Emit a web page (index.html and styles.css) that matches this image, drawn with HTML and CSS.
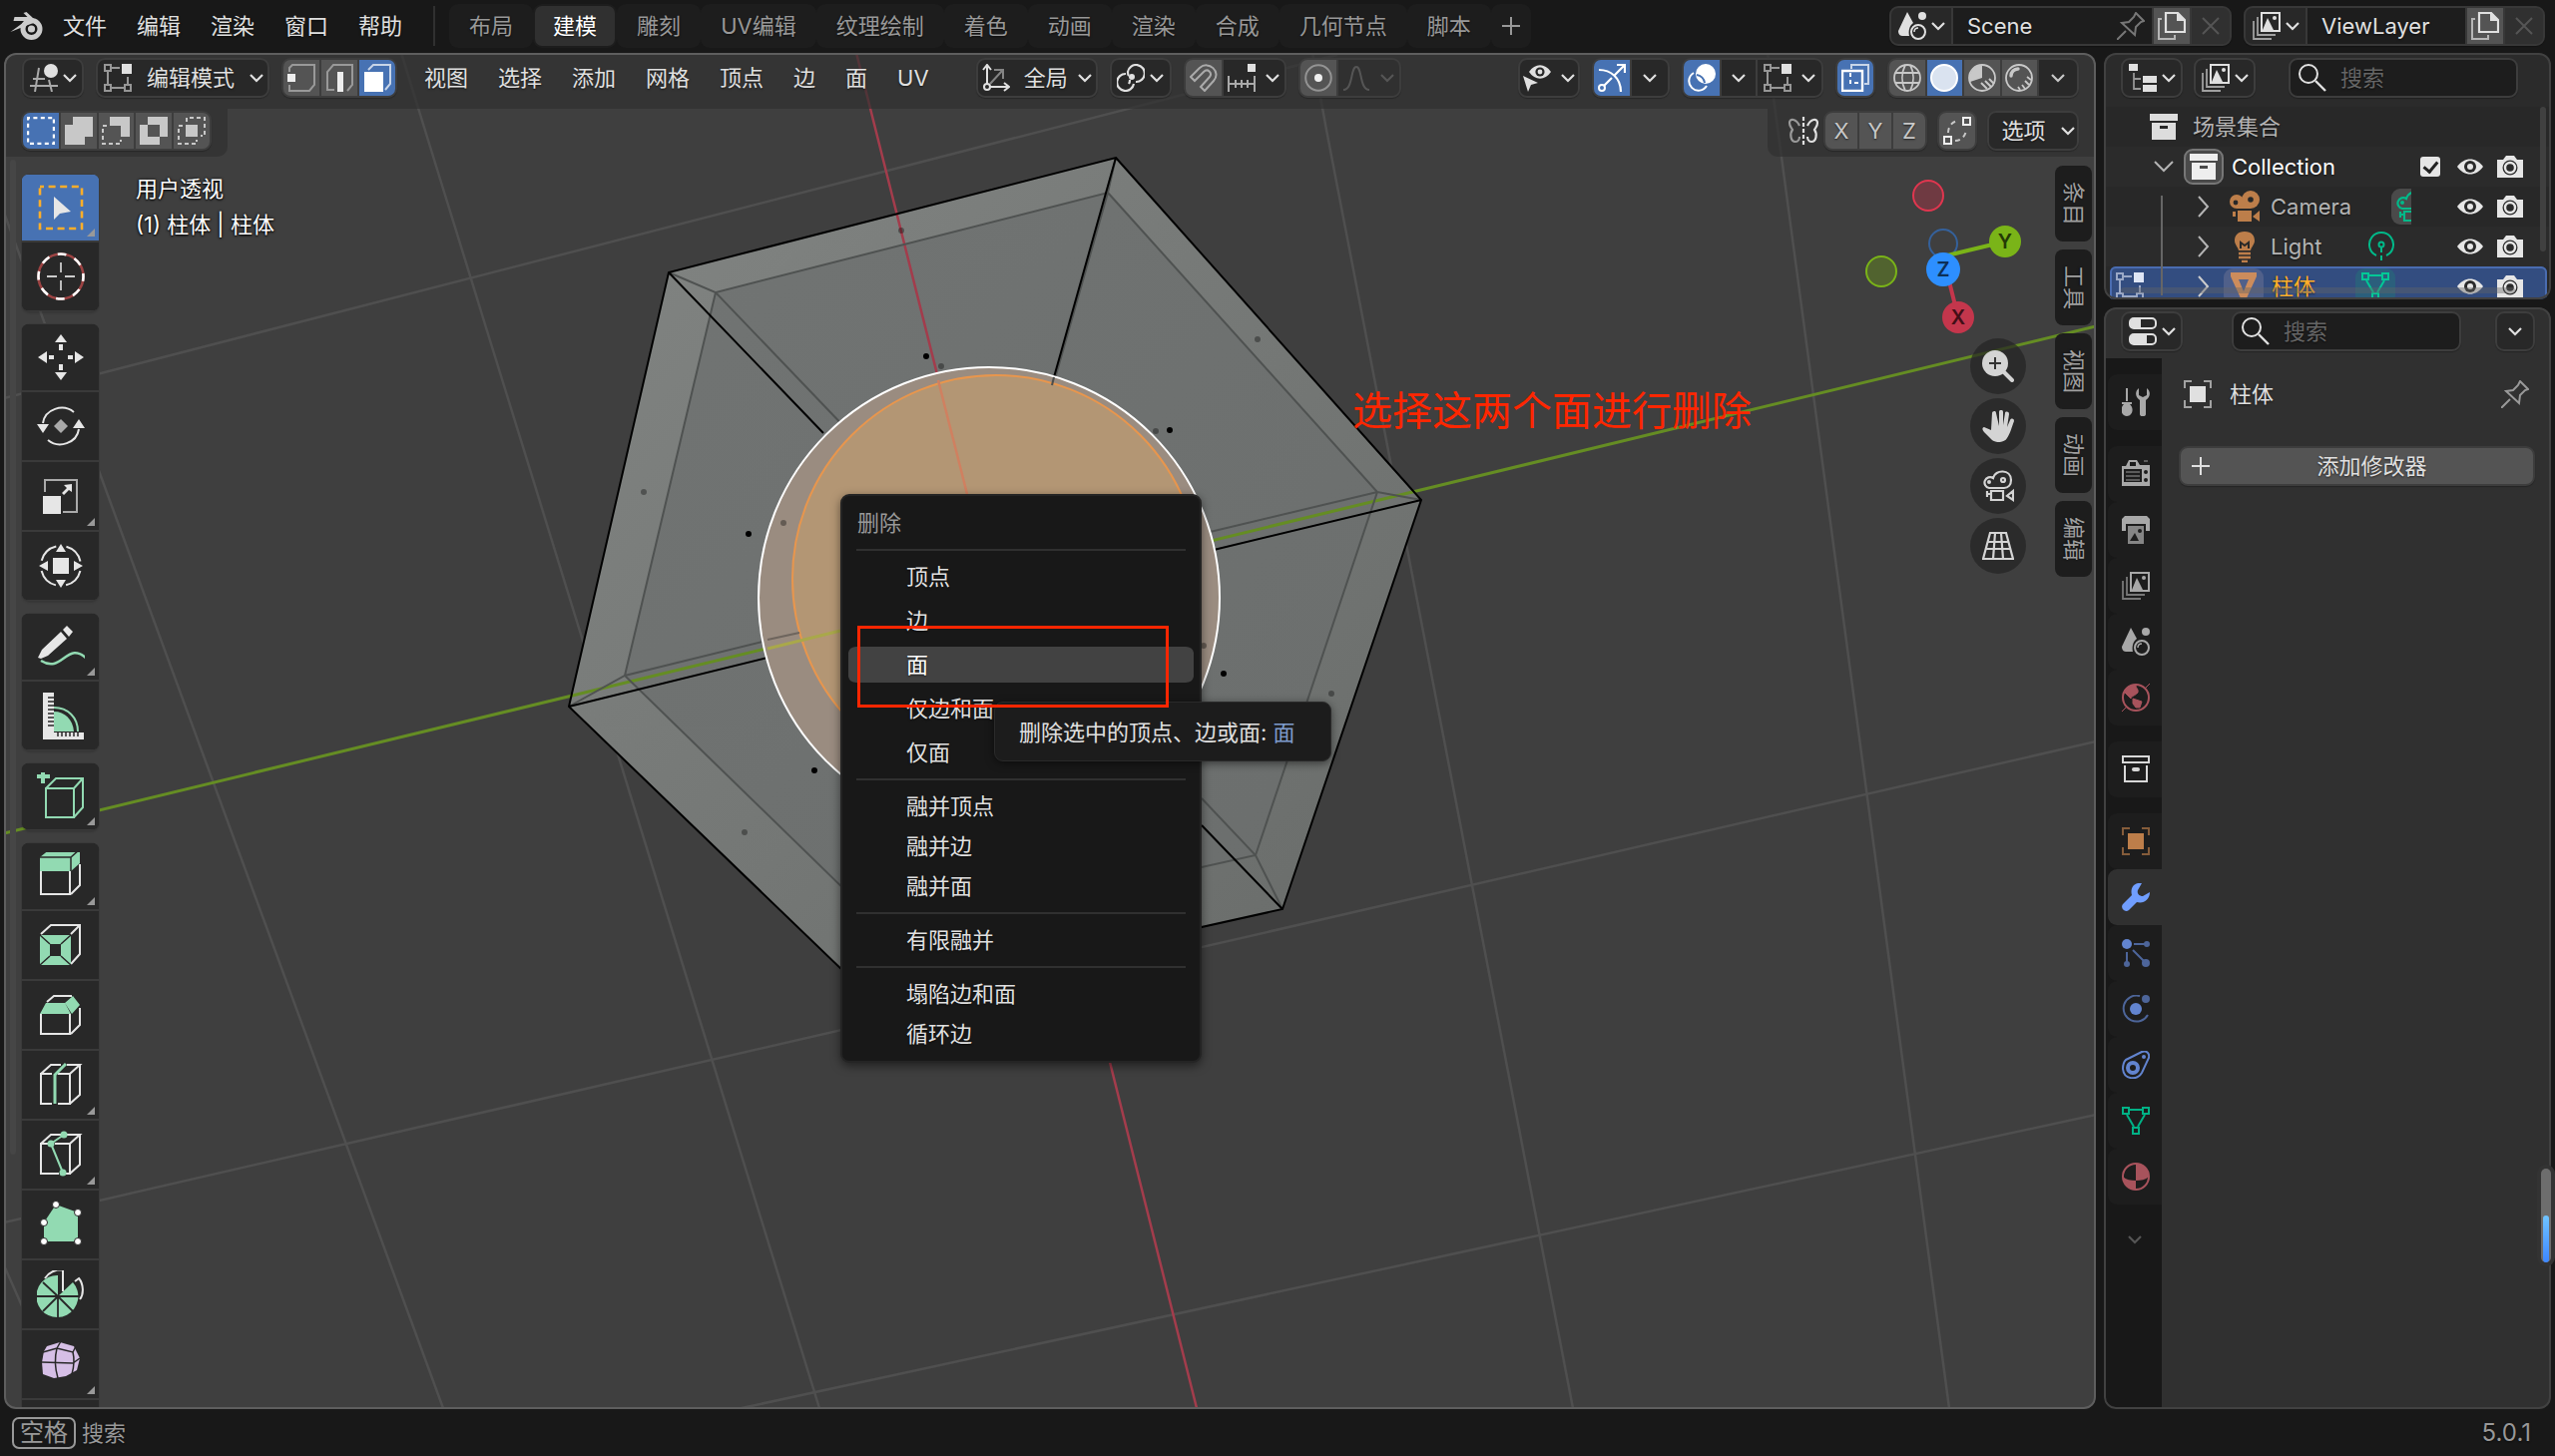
FILE: index.html
```html
<!DOCTYPE html>
<html lang="zh-CN">
<head>
<meta charset="utf-8">
<title>Blender</title>
<link rel="stylesheet" href="styles.css">
</head>
<body>
<svg class="defs" aria-hidden="true">
  <symbol id="chev" viewBox="0 0 14 14"><path d="M1 4l6 6 6-6" fill="none" stroke="currentColor" stroke-width="2.2"/></symbol>
  <symbol id="chevR" viewBox="0 0 28 28"><path d="M9 4l9 10-9 10" fill="none" stroke="currentColor" stroke-width="2"/></symbol>
  <symbol id="chevD" viewBox="0 0 28 28"><path d="M5 9l9 9 9-9" fill="none" stroke="currentColor" stroke-width="2"/></symbol>
  <symbol id="plus" viewBox="0 0 20 20"><path d="M10 1v18M1 10h18" stroke="currentColor" stroke-width="2"/></symbol>
  <symbol id="x" viewBox="0 0 28 28"><path d="M6 6l16 16M22 6L6 22" stroke="currentColor" stroke-width="2"/></symbol>
  <symbol id="logo" viewBox="0 0 32 28"><path d="M0 20L15 9H3l1-4h13l-4-4 3-1 13 12-3 1-3-2-8 3z" fill="currentColor"/><circle cx="21" cy="17" r="8.5" fill="none" stroke="currentColor" stroke-width="5"/><circle cx="21" cy="17" r="3.6" fill="currentColor"/></symbol>
  <symbol id="view3d" viewBox="0 0 28 28"><path d="M9 4L5 28M19 16l3 12M3 15h12M0 22h28" fill="none" stroke="currentColor" stroke-width="2" opacity=".7"/><circle cx="21" cy="7" r="7" fill="currentColor"/></symbol>
  <symbol id="editmode" viewBox="0 0 28 28"><path d="M1 1h6v6H1zM1 21h6v6H1zM21 21h6v6h-6zM4 8v12M8 24h12M24 13v7M8 4h8" fill="none" stroke="currentColor" stroke-width="2" opacity=".6"/><path d="M18 0h10v10H18z" fill="currentColor"/></symbol>
  <symbol id="selV" viewBox="0 0 28 28"><path d="M2 8V4l3-3h22v20l-5 6H2v-6" fill="none" stroke="currentColor" stroke-width="2" opacity=".6"/><path d="M0 10h8v8H0z" fill="#eee"/></symbol>
  <symbol id="selE" viewBox="0 0 28 28"><path d="M9 26H2V8l6-7h19v20l-5 6" fill="none" stroke="currentColor" stroke-width="2" opacity=".6"/><path d="M12 8h6v20h-6z" fill="#eee"/></symbol>
  <symbol id="selF" viewBox="0 0 28 28"><path d="M5 6l5-5h17v19l-5 6" fill="none" stroke="currentColor" stroke-width="2" opacity=".7"/><path d="M1 8h19v20H1z" fill="#fff"/></symbol>
  <symbol id="s1" viewBox="0 0 28 28"><rect x="1" y="1" width="26" height="26" fill="none" stroke="#fff" stroke-width="2.4" stroke-dasharray="4 3.4" stroke-dashoffset="2"/></symbol>
  <symbol id="s2" viewBox="0 0 28 28"><path d="M8 0h20v20h-8v8H0V8h8z" fill="currentColor"/></symbol>
  <symbol id="s3" viewBox="0 0 28 28"><path d="M8 0h20v20h-9V9H8z" fill="currentColor"/><path d="M5 9H1v18h18v-4" fill="none" stroke="currentColor" stroke-width="2" stroke-dasharray="4 3"/></symbol>
  <symbol id="s4" viewBox="0 0 28 28"><path fill-rule="evenodd" d="M8 0h20v20h-8v8H0V8h8zM8 8v12h12V8z" fill="currentColor"/></symbol>
  <symbol id="s5" viewBox="0 0 28 28"><path d="M8 8h12v12H8z" fill="currentColor"/><path d="M5 9H1v18h18v-4M9 5V1h18v18h-4" fill="none" stroke="currentColor" stroke-width="2" stroke-dasharray="4 3"/></symbol>
  <symbol id="orient" viewBox="0 0 28 28"><path d="M5 20V2M1 6l4-5 4 5M8 23h19M22 19l5 4-5 4" fill="none" stroke="currentColor" stroke-width="2"/><circle cx="5" cy="23" r="3" fill="none" stroke="currentColor" stroke-width="2"/><path d="M8 20L20 7M12 6h9v9" fill="none" stroke="currentColor" stroke-width="2" opacity=".5"/></symbol>
  <symbol id="pivot" viewBox="0 0 28 28"><path d="M9 10a8.500 8.500 0 1 0 8 10M12 20a7 7 0 0 0 1-4M19 18a8.500 8.500 0 1 0-8-10c0 2 0 3 1 4" fill="none" stroke="currentColor" stroke-width="2.2"/><circle cx="15" cy="13" r="3" fill="currentColor"/></symbol>
  <symbol id="magnet" viewBox="0 0 28 28"><path d="M1 13L10 4c9-8 22 4 14 13l-9 10-4-4 9-10c3-4-2-9-6-5l-9 9z" fill="none" stroke="currentColor" stroke-width="2"/></symbol>
  <symbol id="snap" viewBox="0 0 28 28"><path d="M1 12v16M27 12v16M1 20h26M8 16v8M14 16v8M20 16v8" stroke="currentColor" stroke-width="2" opacity=".7"/><path d="M20 0h8v8h-8z" fill="currentColor"/></symbol>
  <symbol id="prop" viewBox="0 0 28 28"><circle cx="14" cy="14" r="12.8" fill="none" stroke="currentColor" stroke-width="2" opacity=".45"/><circle cx="14" cy="14" r="4" fill="#eee"/></symbol>
  <symbol id="curve" viewBox="0 0 28 28"><path d="M1 26c10 0 7-23 13-23s3 23 13 23" fill="none" stroke="currentColor" stroke-width="2"/></symbol>
  <symbol id="eyecur" viewBox="0 0 28 28"><path d="M6 8c6-9 16-9 22 0-6 9-16 9-22 0z" fill="currentColor"/><circle cx="17" cy="8" r="4.6" fill="#282828"/><circle cx="17" cy="8" r="2.4" fill="currentColor"/><path d="M0 12l15 7-7 2-3 7z" fill="currentColor"/></symbol>
  <symbol id="giz" viewBox="0 0 28 28"><path d="M1 6c12 0 22 8 22 22M6 22L14 14M17 11L26 2M19 1h8v8" fill="none" stroke="currentColor" stroke-width="2.2"/><circle cx="4" cy="24" r="3" fill="#4772b3" stroke="currentColor" stroke-width="2"/></symbol>
  <symbol id="overl" viewBox="0 0 28 28"><circle cx="18" cy="10" r="10" fill="currentColor"/><path d="M6 9a9.500 9.500 0 1 0 13 13" fill="none" stroke="currentColor" stroke-width="2"/><path d="M9 11a9 9 0 0 1 8 8" fill="none" stroke="#4772b3" stroke-width="2"/></symbol>
  <symbol id="xray" viewBox="0 0 28 28"><path d="M10 5V1h17v19h-4" fill="none" stroke="currentColor" stroke-width="2" opacity=".7"/><path d="M1 7h20v20H1z" fill="none" stroke="currentColor" stroke-width="2.4"/><path d="M9 9v10h10" fill="none" stroke="currentColor" stroke-width="2" stroke-dasharray="4 3"/></symbol>
  <symbol id="wire" viewBox="0 0 28 28"><g fill="none" stroke="currentColor" stroke-width="1.8"><circle cx="14" cy="14" r="13"/><path d="M2 9h24M2 19h24M12 1c-4 8-4 18 0 26M17 1c4 8 4 18 0 26"/></g></symbol>
  <symbol id="solid" viewBox="0 0 28 28"><circle cx="14" cy="14" r="13" fill="#dae3f0" stroke="#fff" stroke-width="2"/></symbol>
  <symbol id="matp" viewBox="0 0 28 28"><circle cx="14" cy="14" r="13" fill="none" stroke="currentColor" stroke-width="1.8"/><path d="M14 1v13l-12 4A13 13 0 0 1 14 1z" fill="currentColor"/><path d="M13 19l6 6M17 17l6 6M21 15l5 5" stroke="currentColor" stroke-width="2"/></symbol>
  <symbol id="rend" viewBox="0 0 28 28"><circle cx="14" cy="14" r="13" fill="none" stroke="currentColor" stroke-width="1.8"/><path d="M6 12c0-4 3-7 7-7" stroke="currentColor" stroke-width="3.4" fill="none" stroke-linecap="round"/><path d="M13 23l2 3M17 21l3 4M20 17l4 4M22 13l4 3" stroke="currentColor" stroke-width="1.8"/></symbol>
  <symbol id="mirror" viewBox="0 0 32 28"><g fill="none" stroke="currentColor" stroke-width="2.2"><path d="M12 9C9 2 2 1 2 6c0 4 2 5 3 7-3 4-2 12 3 12 3 0 4-3 4-5" opacity=".6"/><path d="M20 9c3-7 10-8 10-3 0 4-2 5-3 7 3 4 2 12-3 12-3 0-4-3-4-5"/><path d="M16 0v28" stroke-dasharray="4 2"/></g></symbol>
  <symbol id="merge" viewBox="0 0 28 28"><g fill="none" stroke="currentColor" stroke-width="2"><path d="M20 1h7v7h-7zM1 20h7v7H1z" stroke="#eee"/><path d="M5 16c0-7 5-12 11-12M12 24c6 0 11-5 11-12" stroke-dasharray="5 4"/></g></symbol>
  <symbol id="scene" viewBox="0 0 28 28"><path d="M9 0l6 11c-4 3-5 8-4 13H4c-3 0-4-3-4-5z" fill="currentColor"/><circle cx="24" cy="4" r="4" fill="currentColor"/><circle cx="20" cy="20" r="7" fill="none" stroke="currentColor" stroke-width="2"/><path d="M16 20c0-2 1-4 4-4" fill="none" stroke="currentColor" stroke-width="1.5"/></symbol>
  <symbol id="layer" viewBox="0 0 28 28"><path d="M5 5v18h18M1 9v18h18" fill="none" stroke="currentColor" stroke-width="1.8" opacity=".65"/><path d="M9 1h18v18H9z" fill="none" stroke="currentColor" stroke-width="2"/><path d="M10 18l5-12 6 12z" fill="currentColor"/><circle cx="22" cy="6" r="2" fill="currentColor"/></symbol>
  <symbol id="copy" viewBox="0 0 28 28"><path d="M4 7H1v20h16v-4" fill="none" stroke="currentColor" stroke-width="2" opacity=".7"/><path d="M8 1h12l7 7v12H8z" fill="none" stroke="currentColor" stroke-width="2.2"/><path d="M19 0l9 9h-9z" fill="currentColor"/></symbol>
  <symbol id="pin" viewBox="0 0 28 28"><path d="M0 28l9-9M19 1l8 8-3 1-5 5-1 8L5 11l7-1 5-5z" fill="none" stroke="currentColor" stroke-width="2"/></symbol>
  <symbol id="tree" viewBox="0 0 28 28"><path d="M0 0h9v7H0zM14 12h14v7H14zM14 21h14v7H14z" fill="currentColor"/><path d="M5 9v16h7M5 15h7" fill="none" stroke="currentColor" stroke-width="1.8" opacity=".6"/></symbol>
  <symbol id="search" viewBox="0 0 28 28"><circle cx="10" cy="10" r="9" fill="none" stroke="currentColor" stroke-width="2"/><path d="M17 17l10 10" stroke="currentColor" stroke-width="2.4"/></symbol>
  <symbol id="box" viewBox="0 0 28 28"><path d="M0 1h28v7H0z" fill="currentColor"/><path fill-rule="evenodd" d="M2 10h24v17H2zM10 13v3h8v-3z" fill="currentColor"/></symbol>
  <symbol id="boxo" viewBox="0 0 28 28"><path d="M1 1h26v6H1zM3 10v16h22V10" fill="none" stroke="currentColor" stroke-width="2"/><rect x="10" y="12" width="8" height="4" rx="2" fill="currentColor"/></symbol>
  <symbol id="eye" viewBox="0 0 28 28"><path d="M1 14c7-10 19-10 26 0-7 10-19 10-26 0z" fill="currentColor"/><circle cx="14" cy="14" r="6" fill="#2a2a2a"/><circle cx="14" cy="14" r="3" fill="currentColor"/></symbol>
  <symbol id="cam" viewBox="0 0 28 28"><path d="M1 7h6l3-4h8l3 4h6v18H1z" fill="currentColor"/><circle cx="14" cy="15" r="7.5" fill="#2a2a2a"/><circle cx="14" cy="15" r="5" fill="none" stroke="currentColor" stroke-width="2.4"/></symbol>
  <symbol id="movie" viewBox="0 0 32 32"><circle cx="8" cy="11" r="7" fill="currentColor"/><circle cx="22" cy="9" r="9" fill="currentColor"/><path d="M8 10h14v8H8zM9 20h14v11H9zM4 21h3v5H4zM31 20v11l-7-5z" fill="currentColor"/><circle cx="7" cy="12" r="2.4" fill="#282828"/><circle cx="22" cy="9" r="2.8" fill="#282828"/></symbol>
  <symbol id="movieo" viewBox="0 0 32 32"><g fill="none" stroke="currentColor" stroke-width="2.2"><path d="M7 18a5.500 5.500 0 1 1 4-10c2-9 18-9 18 2 0 5-3 8-7 8zM9 21h12v9H9zM5 21v6M5 24h4M31 21v9l-6-4z"/><circle cx="21" cy="10" r="2"/></g><circle cx="7" cy="12" r="2" fill="currentColor"/></symbol>
  <symbol id="bulb" viewBox="0 0 32 32"><path d="M16 1c7 0 10 4 10 9 0 4-3 6-4 10H10c-1-4-4-6-4-10 0-5 3-9 10-9z" fill="currentColor"/><path d="M10 23h12M10 27h12M13 31h6" stroke="currentColor" stroke-width="2.4"/><path d="M12 18v-6l4 3 4-3v6" fill="none" stroke="#282828" stroke-width="2"/></symbol>
  <symbol id="ldata" viewBox="0 0 28 32"><path d="M9 25A12 12 0 1 1 19 25" fill="none" stroke="currentColor" stroke-width="2"/><circle cx="14" cy="14" r="2.500" fill="none" stroke="currentColor" stroke-width="2"/><path d="M14 17v5M14 25v5" stroke="currentColor" stroke-width="2"/></symbol>
  <symbol id="meshd" viewBox="0 0 28 28"><path d="M1 1h6v6H1zM21 1h6v6h-6zM11 21h6v6h-6zM8 3h12M5 8l7 12M23 8l-7 12" fill="none" stroke="currentColor" stroke-width="2"/></symbol>
  <symbol id="mesho" viewBox="0 0 28 28"><path fill-rule="evenodd" d="M1 0h26v4L16 28h-4L1 4zM9 7l5 12 5-12z" fill="currentColor"/></symbol>
  <symbol id="props" viewBox="0 0 28 28"><rect x="1" y="1" width="26" height="10" rx="4" fill="none" stroke="currentColor" stroke-width="2"/><rect x="1" y="17" width="26" height="10" rx="4" fill="none" stroke="currentColor" stroke-width="2"/><path d="M4 1h8v10H4l-3-3V4zM4 17h14v10H4l-3-3v-4z" fill="currentColor"/></symbol>
  <symbol id="obj" viewBox="0 0 28 28"><path d="M6 6h16v16H6z" fill="currentColor"/><path d="M1 8V1h7M20 1h7v7M27 20v7h-7M8 27H1v-7" fill="none" stroke="currentColor" stroke-width="2" opacity=".65"/></symbol>
  <symbol id="tool" viewBox="0 0 28 28"><path d="M5 0v13" stroke="currentColor" stroke-width="2"/><path d="M0 14h10v2H8c5 5 2 12-3 12s-8-7-3-12H0zM17 0v7l4 2 4-2V0c4 3 4 9-1 12v14c0 3-6 3-6 0V12c-5-3-5-9-1-12z" fill="currentColor"/></symbol>
  <symbol id="rcam" viewBox="0 0 28 28"><path fill-rule="evenodd" d="M0 6h4l3-6h8l3 5h10v21H0zM2 9v13h18V9zM8 2v4h6V2z" fill="currentColor"/><path d="M4 12h14M4 16h14M4 20h14M22 1h4" stroke="currentColor" stroke-width="1.6" opacity=".6"/><circle cx="24" cy="12" r="2" fill="#1d1d1d"/><circle cx="24" cy="20" r="2" fill="#1d1d1d"/></symbol>
  <symbol id="print" viewBox="0 0 28 28"><path d="M3 0h22l3 3v12h-4V8H4v7H0V3z" fill="currentColor"/><path d="M6 10h16v18H6z" fill="currentColor" opacity=".75"/><path d="M8 25l5-8 4 8z" fill="#1d1d1d"/><circle cx="18" cy="15" r="2" fill="#1d1d1d"/></symbol>
  <symbol id="world" viewBox="0 0 28 28"><circle cx="14" cy="14" r="13" fill="none" stroke="currentColor" stroke-width="2"/><path d="M3 6c4-4 8-5 11-4 0 3 3 3 2 7-4 4-6 3-7 6l-6-6zM11 15l9 3-2 6h-4l-3-4zM23 5l5-5M0 28l5-5" fill="currentColor" stroke="currentColor"/></symbol>
  <symbol id="wrench" viewBox="0 0 28 28"><path d="M20 0c-8-1-12 5-10 12L1 21c-3 4 2 9 6 6l8-8c7 2 13-3 13-10l-7 4c-4 0-6-3-5-6z" fill="currentColor"/></symbol>
  <symbol id="part" viewBox="0 0 28 28"><circle cx="5" cy="5" r="5" fill="currentColor"/><g opacity=".7" fill="currentColor"><circle cx="25" cy="5" r="3"/><circle cx="24" cy="24" r="4"/><circle cx="5" cy="25" r="3"/><path d="M12 5h12M11 11l12 12M5 13v11" stroke="currentColor" stroke-width="2"/></g></symbol>
  <symbol id="phys" viewBox="0 0 28 28"><circle cx="14" cy="14" r="6" fill="currentColor"/><path d="M18 1A13 13 0 1 0 26 20" fill="none" stroke="currentColor" stroke-width="2" opacity=".7"/><circle cx="24" cy="4" r="4" fill="currentColor" opacity=".7"/></symbol>
  <symbol id="cons" viewBox="0 0 28 28"><path d="M4 9L20 1c5-2 8 2 7 6l-7 15c-5 8-18 7-19-4 0-4 1-7 3-9z" fill="none" stroke="currentColor" stroke-width="2"/><circle cx="11" cy="17" r="5" fill="none" stroke="currentColor" stroke-width="4"/><circle cx="22" cy="6" r="2" fill="currentColor"/></symbol>
  <symbol id="mat" viewBox="0 0 28 28"><circle cx="14" cy="14" r="13" fill="none" stroke="currentColor" stroke-width="2"/><path d="M14 1a13 13 0 0 1 13 13c-3 3-8 4-13 4zM1 14c3 3 8 4 13 4v9A13 13 0 0 1 1 14z" fill="currentColor"/></symbol>
  <symbol id="zoomi" viewBox="0 0 32 32"><circle cx="13" cy="13" r="13" fill="currentColor"/><path d="M22 22l8 8" stroke="currentColor" stroke-width="4" stroke-linecap="round"/><path d="M13 7v12M7 13h12" stroke="#333" stroke-width="2"/></symbol>
  <symbol id="hand" viewBox="0 0 32 32"><path d="M9 20L2 17c-3 1-1 4 0 5l8 8c4 3 12 3 15-2 3-4 5-12 7-17 0-3-3-3-4-1l-3 7 2-13c0-3-4-3-4-1l-2 12V2c0-3-4-3-4 0v14L14 3c0-3-4-2-4 0z" fill="currentColor"/></symbol>
  <symbol id="persp" viewBox="0 0 32 32"><path d="M8 3h16l7 26H1zM6 12h20M4 19h25M13 3l-2 26M19 3l2 26" fill="none" stroke="currentColor" stroke-width="2.2"/></symbol>

  <symbol id="t-select" viewBox="0 0 48 48"><rect x="3" y="3" width="42" height="42" fill="none" stroke="#ffae29" stroke-width="2.600" stroke-dasharray="7 4.600" stroke-dashoffset="3"/><path d="M17 13l17 15-11 2-6 6z" fill="#e6e6e6"/></symbol>
  <symbol id="t-cursor" viewBox="0 0 48 48"><circle cx="24" cy="24" r="22.500" fill="none" stroke="#9c4343" stroke-width="2.600"/><circle cx="24" cy="24" r="22.500" fill="none" stroke="#fff" stroke-width="2.600" stroke-dasharray="8.840 8.830" stroke-dashoffset="4"/><path d="M24 10v10M24 28v10M10 24h10M28 24h10" stroke="#ccc" stroke-width="1.800"/></symbol>
  <symbol id="t-move" viewBox="0 0 48 48"><path d="M24 1l6 8H18zM24 47l6-8H18zM1 24l9-6v12zM47 24l-9-6v12zM22 11h4v6h-4zM22 31h4v6h-4zM12 22h5v4h-5zM31 22h5v4h-5z" fill="#e6e6e6"/></symbol>
  <symbol id="t-rotate" viewBox="0 0 48 48"><path d="M6 21C8 7 26 1 37 10M42 27c-2 14-20 20-31 11" fill="none" stroke="#e6e6e6" stroke-width="2"/><path d="M0 22h12l-6 9zM36 26h12l-6-9z" fill="#e6e6e6"/><path d="M24 17l7 7-7 7-7-7z" fill="#aaa"/></symbol>
  <symbol id="t-scale" viewBox="0 0 48 48"><path d="M8 20V8h32v32H26" fill="none" stroke="#aaa" stroke-width="2"/><path d="M6 24h18v18H6zM35 12v8l-3-2-5 5-2-2 5-5-3-3z" fill="#e6e6e6"/></symbol>
  <symbol id="t-trans" viewBox="0 0 48 48"><circle cx="24" cy="24" r="20" fill="none" stroke="#e6e6e6" stroke-width="2" stroke-dasharray="21 10.400" stroke-dashoffset="-5"/><path d="M16 16h16v16H16zM24 2l5 8H19zM24 46l5-8H19zM2 24l9-5v10zM46 24l-9-5v10z" fill="#e6e6e6"/></symbol>
  <symbol id="t-anno" viewBox="0 0 48 48"><path d="M1 35l4-8 19-18 6 7-19 17-7 3zM26 7l4-4 6 6-4 5z" fill="#e6e6e6"/><path d="M4 38c22 14 26-22 47-1" fill="none" stroke="#92dab2" stroke-width="2.600"/></symbol>
  <symbol id="t-meas" viewBox="0 0 48 48"><path d="M6 1h11v40h30v7H6z" fill="#e6e6e6"/><path d="M17 20v20h20C36 28 28 20 17 20z" fill="#92dab2"/><path d="M17 16c14 0 24 10 24 24" fill="none" stroke="#92dab2" stroke-width="2"/><path d="M11 6h6M11 10h6M11 14h6M11 18h6M11 22h6M11 26h6M11 30h6M11 34h6M21 41v4M25 41v4M29 41v4M33 41v4M37 41v4M41 41v4" stroke="#282828" stroke-width="1.500"/></symbol>
  <symbol id="t-add" viewBox="0 0 48 48"><path d="M9 19h28v29H9zM9 19l10-10h27v29L37 48M37 19l9-10" transform="translate(0 -3)" fill="none" stroke="#92dab2" stroke-width="2"/><path d="M-1 4h14M6-3v14" stroke="#92dab2" stroke-width="4"/></symbol>
  <symbol id="t-ext" viewBox="0 0 48 48"><path d="M4 19v23h29V19M34 42l9-9V12" fill="none" stroke="#e6e6e6" stroke-width="2"/><path d="M3 5l10-8h30v14l-9 8H3z" fill="#92dab2"/><path d="M3 5h31l9-8M34 5v14" fill="none" stroke="#282828" stroke-width="1.500"/></symbol>
  <symbol id="t-inset" viewBox="0 0 48 48"><path d="M4 13l10-9h29v29l-9 10M34 13l9-9" fill="none" stroke="#e6e6e6" stroke-width="2"/><path fill-rule="evenodd" d="M3 14h31v30H3zM13 23v12h11V23z" fill="#92dab2"/><path d="M3 14l10 9M34 14l-10 9M3 44l10-9M34 44l-10-9" stroke="#282828" stroke-width="1.500"/></symbol>
  <symbol id="t-bevel" viewBox="0 0 48 48"><path d="M4 23v20h29V23M34 43l9-9V17M10 11l7-6h18" fill="none" stroke="#e6e6e6" stroke-width="2"/><path d="M3 23l6-11h19l6 11zM28 12l8-7 7 9-8 9z" fill="#92dab2"/></symbol>
  <symbol id="t-loop" viewBox="0 0 48 48"><path d="M15 13H4v30h11M21 13h12v30H21M4 13l10-9h10M33 13l10-9H30M43 4v30l-10 9" fill="none" stroke="#e6e6e6" stroke-width="2"/><path d="M18 43V14L29 3" fill="none" stroke="#92dab2" stroke-width="3"/></symbol>
  <symbol id="t-knife" viewBox="0 0 48 48"><path d="M11 13H4v30h18M18 13h15v30h-5M4 13l10-9h10M33 13l10-9H30M43 4v30l-10 9" fill="none" stroke="#e6e6e6" stroke-width="2"/><path d="M27 4L14 13l12 29" fill="none" stroke="#92dab2" stroke-width="2"/><g fill="#92dab2"><circle cx="27" cy="4" r="3.500"/><circle cx="14" cy="13" r="3.500"/><circle cx="26" cy="42" r="3.500"/></g></symbol>
  <symbol id="t-poly" viewBox="0 0 48 48"><path d="M7 41V22L19 4l22 8v29z" fill="#92dab2"/><g fill="#fff" stroke="#282828"><circle cx="7" cy="41" r="3.500"/><circle cx="7" cy="22" r="3.500"/><circle cx="19" cy="4" r="3.500"/><circle cx="41" cy="12" r="3.500"/><circle cx="41" cy="41" r="3.500"/></g></symbol>
  <symbol id="t-spin" viewBox="0 0 48 48"><path d="M8 8C12 2 19-1 26-1v22M38 11l4-3c5 6 5 16 1 21" fill="none" stroke="#e6e6e6" stroke-width="2"/><path d="M21 26V5a21 21 0 1 0 15 7z" fill="#92dab2"/><path d="M21 26v22M21 26H0M21 26h21M21 26L6 12M21 26L6 41M21 26l15 15" stroke="#282828" stroke-width="1.800"/></symbol>
  <symbol id="t-smooth" viewBox="0 0 48 48"><path d="M7 11l3-5 13-4 14 4 6 12-3 12-11 6-12 2-11-4-1-12z" fill="#d6bfe6"/><path d="M6 12l14-4 16 4 3-6M20 8l4-7M20 8c-2 8-2 20 1 30M5 22l31 1 7-5M36 12c2 8 1 15-1 22" fill="none" stroke="#282828" stroke-width="1.500"/></symbol>
  <symbol id="t-next" viewBox="0 0 48 48"><path d="M-1 5l8-5v8z" fill="#d6bfe6"/></symbol>
</svg>

<header class="topbar">
  <nav class="menus">
    <button class="logo" aria-label="Blender"><svg><use href="#logo"/></svg></button>
    <button>文件</button><button>编辑</button><button>渲染</button><button>窗口</button><button>帮助</button>
  </nav>
  <nav class="tabs">
    <button>布局</button><button class="on">建模</button><button>雕刻</button><button>UV编辑</button><button>纹理绘制</button><button>着色</button><button>动画</button><button>渲染</button><button>合成</button><button>几何节点</button><button>脚本</button><button class="add" aria-label="添加工作区"><svg><use href="#plus"/></svg></button>
  </nav>
  <div class="ids">
    <div class="ctl id-scene">
      <button class="dd" aria-label="场景"><svg class="i"><use href="#scene"/></svg><svg class="c"><use href="#chev"/></svg></button>
      <input type="text" value="Scene" aria-label="场景名称">
      <button class="pin" aria-label="固定"><svg class="i"><use href="#pin"/></svg></button>
      <button class="lit" aria-label="新建场景"><svg class="i"><use href="#copy"/></svg></button>
      <button class="off" aria-label="删除场景"><svg class="i"><use href="#x"/></svg></button>
    </div>
    <div class="ctl id-layer">
      <button class="dd" aria-label="视图层"><svg class="i"><use href="#layer"/></svg><svg class="c"><use href="#chev"/></svg></button>
      <input type="text" value="ViewLayer" aria-label="视图层名称">
      <button class="lit" aria-label="新建视图层"><svg class="i"><use href="#copy"/></svg></button>
      <button class="off" aria-label="删除视图层"><svg class="i"><use href="#x"/></svg></button>
    </div>
  </div>
</header>

<main class="main">
  <section class="area viewport">
    <svg class="canvas" viewBox="4 53 2096 1359" preserveAspectRatio="xMidYMid slice">
      <defs>
        <linearGradient id="gOut" x1="0" y1="0" x2="1" y2="1"><stop offset="0" stop-color="#828583"/><stop offset="1" stop-color="#686b69"/></linearGradient>
        <linearGradient id="gIn" x1="0" y1="0" x2="1" y2="1"><stop offset="0" stop-color="#717473"/><stop offset="1" stop-color="#6b6e6d"/></linearGradient>
      </defs>
      <g stroke="#4f4f4f" stroke-width="2.500">
        <path d="M402 53L435 160 550 532 821 1411M4 213L444 1411M4 1268L67 1411M1315 53L1329 130 1576 1411M1771 53L1953 1411M4 399L1340 55M4 1225L2100 743M743 1411L2100 1117" fill="none"/>
      </g>
      <path d="M1118 158L1424 501 1285 911 875 1002 570 708 670 273z" fill="url(#gOut)"/>
      <path d="M1110 193L1380 493 1258 857 894 938 626 677 717 293z" fill="url(#gIn)"/>
      <path d="M858 53L985 558 1199 1411" stroke="#a33c4c" stroke-width="2.500" fill="none"/>
      <path d="M4 835L2100 327" stroke="#658d23" stroke-width="3"/>
      <g fill="none" stroke="#4f5251" stroke-width="2">
        <path d="M1110 193L1380 493 1258 857 894 938 626 677 717 293zM1118 158L1110 193 1056 383M1424 501L1380 493 1204 535M1285 911L1258 857 1204 800M570 708L626 677 801 634M670 273L717 293 852 434"/>
      </g>
      <g fill="none" stroke="#000" stroke-width="2">
        <path d="M1118 158L1424 501 1285 911 875 1002 570 708 670 273zM1118 158L1056 378M670 273L825 434M1424 501L1216 551M570 708L769 659M1285 911L1204 827"/>
      </g>
      <circle cx="991" cy="599" r="231" fill="#9a8c80" stroke="#fff" stroke-width="2"/>
      <circle cx="998" cy="580" r="204" fill="#b39674" stroke="#e8964d" stroke-width="2"/>
      <path d="M940 381L969 495" stroke="#d08060" stroke-width="2.500"/>
      <path d="M1056 378l-2 8" stroke="#4b4e4d" stroke-width="2"/>
      <path d="M769 650L842 632" stroke="#a9a84a" stroke-width="3"/>
      <path d="M769 641L801 634" stroke="#6e655d" stroke-width="2"/>
      <g fill="#000"><circle cx="928" cy="357" r="3"/><circle cx="1172" cy="431" r="3"/><circle cx="750" cy="535" r="3"/><circle cx="816" cy="772" r="3"/><circle cx="1226" cy="675" r="3"/></g>
      <g fill="#000" fill-opacity=".35"><circle cx="903" cy="231" r="3"/><circle cx="943" cy="367" r="3"/><circle cx="1260" cy="340" r="3"/><circle cx="1158" cy="432" r="3"/><circle cx="645" cy="493" r="3"/><circle cx="785" cy="524" r="3"/><circle cx="1334" cy="695" r="3"/><circle cx="1206" cy="647" r="3"/><circle cx="746" cy="834" r="3"/></g>
    </svg>

    <div class="vhead">
      <div class="ctl w62"><button class="dd" aria-label="编辑器类型"><svg class="i"><use href="#view3d"/></svg><svg class="c"><use href="#chev"/></svg></button></div>
      <div class="ctl mode"><button class="dd"><svg class="i"><use href="#editmode"/></svg><span>编辑模式</span><svg class="c"><use href="#chev"/></svg></button></div>
      <div class="ctl cells sel3"><button aria-label="顶点选择"><svg class="i"><use href="#selV"/></svg></button><button aria-label="边选择"><svg class="i"><use href="#selE"/></svg></button><button class="blue" aria-label="面选择"><svg class="i"><use href="#selF"/></svg></button></div>
      <nav class="menus"><button>视图</button><button>选择</button><button>添加</button><button>网格</button><button>顶点</button><button>边</button><button>面</button><button>UV</button></nav>
      <div class="vmid">
        <div class="ctl orient"><button class="dd"><svg class="i"><use href="#orient"/></svg><span>全局</span><svg class="c"><use href="#chev"/></svg></button></div>
        <div class="ctl w62"><button class="dd" aria-label="轴心点"><svg class="i"><use href="#pivot"/></svg><svg class="c"><use href="#chev"/></svg></button></div>
        <div class="ctl snap"><button class="lit" aria-label="吸附"><svg class="i dim"><use href="#magnet"/></svg></button><button class="dd" aria-label="吸附到"><svg class="i"><use href="#snap"/></svg><svg class="c"><use href="#chev"/></svg></button></div>
        <div class="ctl snap"><button class="lit" aria-label="衰减编辑"><svg class="i"><use href="#prop"/></svg></button><button class="dd off" aria-label="衰减类型"><svg class="i"><use href="#curve"/></svg><svg class="c"><use href="#chev"/></svg></button></div>
      </div>
      <div class="vright">
        <div class="ctl w62 eyes"><button class="dd" aria-label="可选性"><svg class="i"><use href="#eyecur"/></svg><svg class="c"><use href="#chev"/></svg></button></div>
        <div class="ctl giz"><button class="blue" aria-label="显示控件"><svg class="i"><use href="#giz"/></svg></button><button class="dd" aria-label="控件"><svg class="c"><use href="#chev"/></svg></button></div>
        <div class="ctl overl"><button class="blue" aria-label="显示叠加层"><svg class="i"><use href="#overl"/></svg></button><button class="dd" aria-label="叠加层"><svg class="c"><use href="#chev"/></svg></button><button class="dd wide" aria-label="网格编辑模式"><svg class="i"><use href="#editmode"/></svg><svg class="c"><use href="#chev"/></svg></button></div>
        <div class="ctl one"><button class="blue" aria-label="透视模式"><svg class="i"><use href="#xray"/></svg></button></div>
        <div class="ctl cells shade"><button aria-label="线框"><svg class="i"><use href="#wire"/></svg></button><button class="blue" aria-label="实体"><svg class="i"><use href="#solid"/></svg></button><button aria-label="材质预览"><svg class="i"><use href="#matp"/></svg></button><button aria-label="渲染"><svg class="i"><use href="#rend"/></svg></button><button class="dd" aria-label="着色"><svg class="c"><use href="#chev"/></svg></button></div>
      </div>
    </div>
    <div class="vsub">
      <div class="sub subl">
        <div class="ctl cells sel5"><button class="blue" aria-label="设置"><svg class="i"><use href="#s1"/></svg></button><button aria-label="扩展"><svg class="i"><use href="#s2"/></svg></button><button aria-label="减去"><svg class="i"><use href="#s3"/></svg></button><button aria-label="差值"><svg class="i"><use href="#s4"/></svg></button><button aria-label="相交"><svg class="i"><use href="#s5"/></svg></button></div>
      </div>
      <div class="sub subr">
        <svg class="mir"><use href="#mirror"/></svg>
        <div class="ctl cells xyz"><button>X</button><button>Y</button><button>Z</button></div>
        <div class="ctl cells one"><button aria-label="自动合并"><svg class="i"><use href="#merge"/></svg></button></div>
        <div class="ctl opts"><button class="dd"><span>选项</span><svg class="c"><use href="#chev"/></svg></button></div>
      </div>
    </div>

    <div class="vscroll"></div>
    <div class="toolbar">
      <div class="tg"><button class="blue sub" aria-label="框选"><svg><use href="#t-select"/></svg></button><button aria-label="游标"><svg><use href="#t-cursor"/></svg></button></div>
      <div class="tg"><button aria-label="移动"><svg><use href="#t-move"/></svg></button><button aria-label="旋转"><svg><use href="#t-rotate"/></svg></button><button class="sub" aria-label="缩放"><svg><use href="#t-scale"/></svg></button><button aria-label="变换"><svg><use href="#t-trans"/></svg></button></div>
      <div class="tg"><button class="sub" aria-label="标注"><svg><use href="#t-anno"/></svg></button><button aria-label="测量"><svg><use href="#t-meas"/></svg></button></div>
      <div class="tg"><button class="sub" aria-label="添加立方体"><svg><use href="#t-add"/></svg></button></div>
      <div class="tg"><button class="sub" aria-label="挤出"><svg><use href="#t-ext"/></svg></button><button aria-label="内插面"><svg><use href="#t-inset"/></svg></button><button aria-label="倒角"><svg><use href="#t-bevel"/></svg></button><button class="sub" aria-label="环切"><svg><use href="#t-loop"/></svg></button><button class="sub" aria-label="切割"><svg><use href="#t-knife"/></svg></button><button aria-label="多边形建形"><svg><use href="#t-poly"/></svg></button><button aria-label="旋绕"><svg><use href="#t-spin"/></svg></button><button class="sub" aria-label="光滑"><svg><use href="#t-smooth"/></svg></button><button aria-label="滑移"><svg><use href="#t-next"/></svg></button></div>
    </div>

    <div class="info"><p>用户透视</p><p>(1) 柱体 | 柱体</p></div>

    <svg class="gizmo" viewBox="1868 178 160 160">
      <circle cx="1947" cy="244" r="14" fill="none" stroke="#35619b" stroke-width="2"/>
      <path d="M1947 257L2009 242" stroke="#7ab418" stroke-width="4"/><path d="M1950 270L1962 318" stroke="#c4364c" stroke-width="4"/>
      <circle cx="1932" cy="196" r="15" fill="#6f3a42" stroke="#e0364f" stroke-width="2"/>
      <circle cx="1885" cy="272" r="15" fill="#51632f" stroke="#7ab418" stroke-width="2"/>
      <circle cx="2009" cy="242" r="16" fill="#7ab418"/><circle cx="1962" cy="318" r="16" fill="#c4364c"/><circle cx="1947" cy="270" r="17" fill="#2d8fff"/>
      <g class="axl"><text x="2009" y="249" fill="#243a05">Y</text><text x="1962" y="325" fill="#420f17">X</text><text x="1947" y="277" fill="#0d3057">Z</text></g>
    </svg>
    <div class="nav">
      <button aria-label="缩放视图"><svg><use href="#zoomi"/></svg></button><button aria-label="移动视图"><svg><use href="#hand"/></svg></button><button aria-label="摄像机视图"><svg><use href="#movieo"/></svg></button><button aria-label="透视/正交"><svg><use href="#persp"/></svg></button>
    </div>
    <div class="rtabs"><button>条目</button><button>工具</button><button>视图</button><button>动画</button><button>编辑</button></div>

    <div class="popup" role="menu">
      <div class="ptitle">删除</div>
      <hr>
      <div class="pg roomy"><button>顶点</button><button>边</button><button class="hot">面</button><button>仅边和面</button><button>仅面</button></div>
      <hr>
      <div class="pg"><button>融并顶点</button><button>融并边</button><button>融并面</button></div>
      <hr>
      <div class="pg"><button>有限融并</button></div>
      <hr>
      <div class="pg"><button>塌陷边和面</button><button>循环边</button></div>
    </div>
    <div class="tip" role="tooltip">删除选中的顶点、边或面: <b>面</b></div>
    <div class="mark"></div>
    <p class="note">选择这两个面进行删除</p>
  </section>

  <aside class="side">
    <section class="area outliner">
      <div class="ohead">
        <div class="ctl w62"><button class="dd" aria-label="编辑器类型"><svg class="i"><use href="#tree"/></svg><svg class="c"><use href="#chev"/></svg></button></div>
        <div class="ctl w62"><button class="dd" aria-label="显示模式"><svg class="i"><use href="#layer"/></svg><svg class="c"><use href="#chev"/></svg></button></div>
        <label class="ctl search"><svg class="i"><use href="#search"/></svg><input type="text" placeholder="搜索" aria-label="搜索大纲"></label>
      </div>
      <ul class="rows">
        <li class="root"><svg class="i"><use href="#box"/></svg><span>场景集合</span></li>
        <li class="coll alt"><svg class="i"><use href="#chevD"/></svg><i class="bd ring"><svg class="i"><use href="#box"/></svg></i><span>Collection</span>
          <div class="tog"><input type="checkbox" checked aria-label="启用集合"><svg class="i"><use href="#eye"/></svg><svg class="i"><use href="#cam"/></svg></div></li>
        <li class="obj"><svg class="i"><use href="#chevR"/></svg><svg class="o"><use href="#movie"/></svg><span>Camera</span><i class="bd half"><svg class="o"><use href="#movieo"/></svg></i>
          <div class="tog"><svg class="i"><use href="#eye"/></svg><svg class="i"><use href="#cam"/></svg></div></li>
        <li class="obj alt"><svg class="i"><use href="#chevR"/></svg><svg class="o"><use href="#bulb"/></svg><span>Light</span><i class="bd plain"><svg class="o"><use href="#ldata"/></svg></i>
          <div class="tog"><svg class="i"><use href="#eye"/></svg><svg class="i"><use href="#cam"/></svg></div></li>
        <li class="obj act"><svg class="i em"><use href="#editmode"/></svg><svg class="i"><use href="#chevR"/></svg><i class="bd om"><svg class="i"><use href="#mesho"/></svg></i><span>柱体</span><i class="bd dm"><svg class="i"><use href="#meshd"/></svg></i>
          <div class="tog"><svg class="i"><use href="#eye"/></svg><svg class="i"><use href="#cam"/></svg></div></li>
      </ul>
      <div class="osv"></div><div class="osh"></div>
    </section>

    <section class="area props">
      <div class="phead">
        <div class="ctl w62"><button class="dd" aria-label="编辑器类型"><svg class="i"><use href="#props"/></svg><svg class="c"><use href="#chev"/></svg></button></div>
        <label class="ctl search"><svg class="i"><use href="#search"/></svg><input type="text" placeholder="搜索" aria-label="搜索属性"></label>
        <div class="ctl drop"><button class="dd" aria-label="选项"><svg class="c"><use href="#chev"/></svg></button></div>
      </div>
      <div class="pbody">
        <nav class="ptabs">
          <div><button aria-label="工具"><svg class="i"><use href="#tool"/></svg></button></div>
          <div><button aria-label="渲染"><svg class="i"><use href="#rcam"/></svg></button><button aria-label="输出"><svg class="i"><use href="#print"/></svg></button><button aria-label="视图层"><svg class="i"><use href="#layer"/></svg></button><button aria-label="场景"><svg class="i"><use href="#scene"/></svg></button><button class="red" aria-label="世界"><svg class="i"><use href="#world"/></svg></button></div>
          <div><button class="wht" aria-label="集合"><svg class="i"><use href="#boxo"/></svg></button></div>
          <div><button class="org" aria-label="物体"><svg class="i"><use href="#obj"/></svg></button><button class="on" aria-label="修改器"><svg class="i"><use href="#wrench"/></svg></button><button class="blu" aria-label="粒子"><svg class="i"><use href="#part"/></svg></button><button class="blu" aria-label="物理"><svg class="i"><use href="#phys"/></svg></button><button class="blu" aria-label="约束"><svg class="i"><use href="#cons"/></svg></button><button class="grn" aria-label="数据"><svg class="i"><use href="#meshd"/></svg></button><button class="red" aria-label="材质"><svg class="i"><use href="#mat"/></svg></button></div>
          <svg class="c more"><use href="#chev"/></svg>
        </nav>
        <div class="pcont">
          <div class="crumb"><svg class="i"><use href="#obj"/></svg><span>柱体</span><svg class="i pn"><use href="#pin"/></svg></div>
          <button class="addmod"><svg><use href="#plus"/></svg><span>添加修改器</span></button>
        </div>
      </div>
    </section>
  </aside>
  <div class="meter"><i></i></div>
</main>

<footer class="status"><kbd>空格</kbd><span>搜索</span><span class="ver">5.0.1</span></footer>
</body>
</html>
```
FILE: styles.css
```css
* { box-sizing: border-box; }
html, body { height: 100%; }
body {
  margin: 0; display: flex; flex-direction: column; overflow: hidden;
  background: #181818; color: #e0e0e0;
  font: 22px/32px Inter, "Noto Sans CJK SC", sans-serif;
}
button, input { font: inherit; color: inherit; border: 0; margin: 0; padding: 0; background: none; min-width: 0; }
button { display: flex; align-items: center; white-space: nowrap; }
button, span, p, input { text-shadow: 0 1px 2px rgba(0,0,0,.6); }
p { margin: 0; }
svg { display: block; flex: none; }
.defs { position: absolute; width: 0; height: 0; }
.i { width: 28px; height: 28px; }
.c { width: 14px; height: 14px; }
.o { width: 32px; height: 32px; }

/* shared controls */
.ctl { display: flex; height: 40px; border: 2px solid #3d3d3d; border-radius: 9px; background: #3d3d3d; overflow: hidden; gap: 2px; box-shadow: 0 1px 1px rgba(0,0,0,.25); flex: none; }
.ctl button { height: 36px; justify-content: center; }
.ctl .dd { flex: 1; background: #282828; gap: 5px; }
.ctl .lit { width: 36px; background: #545454; }
.ctl .off { background: #303030; color: #555; }
.ctl .blue { background: #4772b3; color: #fff; width: 36px; }
.cells button { flex: 1; background: #545454; color: #c8c8c8; }
.w62 { width: 62px; }
.eyes .dd { gap: 10px; }
.dim { color: #aaa; }
.menus { display: flex; }
.menus button { padding: 0 15px; height: 40px; }

/* top bar */
.topbar { display: flex; align-items: flex-start; height: 53px; flex: none; padding: 0 10px; }
.topbar .menus { padding: 0 16px 0 0; height: 40px; margin: 6px 0; border-right: 2px solid #303030; }
.topbar .menus .logo { padding: 0 5px 0 0; color: #ccc; }
.logo svg { width: 33px; height: 28px; }
.tabs { display: flex; padding: 4px 0 0 14px; color: #989898; }
.tabs button { height: 44px; padding: 0 20px; background: #1d1d1d; border-radius: 9px; }
.tabs .on { background: #303030; color: #fff; border: 2px solid #1d1d1d; padding: 0 18px; }
.tabs .add { padding: 0 10px; }
.tabs .add svg { width: 20px; height: 20px; }
.ids { display: flex; gap: 12px; margin: 6px 0 0 auto; }
.ids .ctl { background: #383838; border-color: #383838; }
.ids .dd { flex: 0 0 60px; }
.ids input { flex: 1; background: #1d1d1d; padding-left: 14px; }
.ids .pin { background: #1d1d1d; margin-left: -2px; width: 42px; color: #777; }
.ids .off { width: 38px; }
.id-scene { width: 343px; }
.id-layer { width: 302px; }

/* areas */
.main { flex: 1; min-height: 0; display: flex; gap: 8px; padding: 0 4px; position: relative; }
.area { position: relative; overflow: hidden; border-radius: 12px; }
.area::after { content: ""; position: absolute; inset: 0; border: 2px solid #414141; border-radius: 12px; pointer-events: none; }
.viewport { flex: 1; background: #3f3f3f; min-width: 0; }
.viewport::after { border-color: #5e5e5e; }
.canvas { position: absolute; inset: 0; width: 100%; height: 100%; }
.vhead { position: relative; display: flex; gap: 12px; height: 56px; padding: 5px 17px 0 18px; background: rgba(48,48,48,.7); }
.mode { width: 174px; }
.mode .dd { gap: 15px; padding-left: 2px; }
.sel3 { width: 116px; }
.vmid { display: flex; gap: 12px; margin-left: 20px; }
.orient { width: 122px; }
.orient .dd { gap: 10px; }
.orient span { padding-left: 4px; }
.snap { width: 103px; }
.snap .dd { gap: 10px; }
.vright { display: flex; gap: 12px; margin-left: auto; }
.giz { width: 78px; }
.overl { width: 142px; }
.overl .wide { flex: 0 0 64px; gap: 10px; }
.one { width: 40px; }
.shade { width: 192px; }
.shade .dd { flex: 0 0 38px; background: #282828; }
.vsub { position: relative; display: flex; justify-content: space-between; align-items: flex-start; height: 48px; }
.sub { display: flex; gap: 10px; height: 48px; padding-top: 2px; background: rgba(48,48,48,.7); }
.subl { padding-left: 17px; padding-right: 16px; border-radius: 0 0 10px 0; }
.subr { padding-left: 20px; padding-right: 17px; border-radius: 0 0 0 10px; }
.sel5 { width: 191px; }
.mir { width: 32px; height: 28px; margin: 6px -6px 0 0; }
.xyz { width: 104px; }
.opts { width: 92px; }
.opts .dd { gap: 15px; padding-left: 10px; }

/* tools */
.vscroll { position: absolute; left: 6px; top: 107px; width: 6px; height: 997px; border-radius: 3px; background: #464646; }
.toolbar { position: absolute; left: 17px; top: 121px; bottom: 2px; width: 79px; overflow: hidden; display: flex; flex-direction: column; gap: 12px; }
.tg { display: flex; flex-direction: column; gap: 2px; padding: 1px; border-radius: 9px; background: #3a3a3a; flex: none; overflow: hidden; box-shadow: 0 2px 2px rgba(0,0,0,.15); }
.tg button { height: 68px; background: #282828; justify-content: center; position: relative; flex: none; }
.tg button:first-child { height: 66px; }
.tg .blue { background: #4772b3; }
.tg svg { width: 48px; height: 48px; overflow: visible; }
.tg .sub { gap: 0; padding: 0; }
.tg .sub::after { content: ""; position: absolute; right: 4px; bottom: 4px; border: 4px solid transparent; border-right-color: #999; border-bottom-color: #999; }
.info { position: absolute; left: 132px; top: 118px; line-height: 36px; color: #fff; }
.info p { text-shadow: 0 0 3px #000, 0 1px 2px #000; }

/* navigation */
.gizmo { position: absolute; right: 72px; top: 125px; width: 160px; height: 160px; }
.axl { font-size: 20px; font-weight: 600; text-anchor: middle; }
.nav { position: absolute; right: 70px; top: 286px; display: flex; flex-direction: column; gap: 4px; }
.nav button { width: 56px; height: 56px; border-radius: 50%; background: rgba(36,36,36,.7); justify-content: center; color: #d4d4d4; }
.nav svg { width: 32px; height: 32px; }
.rtabs { position: absolute; right: 4px; top: 113px; display: flex; flex-direction: column; gap: 8px; }
.rtabs button { width: 37px; height: 76px; border-radius: 8px; background: #1d1d1d; color: #a0a0a0; writing-mode: vertical-rl; text-orientation: sideways; justify-content: center; }

/* delete menu */
.popup { position: absolute; left: 838px; top: 442px; width: 362px; padding: 0 6px 7px; border: 2px solid #242424; border-radius: 9px; background: #181818; box-shadow: 0 3px 10px rgba(0,0,0,.5); }
.ptitle { height: 47px; padding: 11px 0 0 9px; color: #989898; }
.popup hr { margin: 6px 8px; border: 0; height: 2px; background: #303030; }
.pg { display: flex; flex-direction: column; }
.roomy { gap: 4px; }
.pg button { height: 40px; padding-left: 58px; border: 2px solid transparent; border-width: 2px 0; background-clip: padding-box; border-radius: 8px; }
.pg .hot { background-color: #424242; color: #fff; }
.tip { position: absolute; left: 992px; top: 650px; width: 338px; height: 60px; padding: 14px 0 0 24px; border: 1px solid #2a2a2a; border-radius: 9px; background: #1c1c1c; box-shadow: 0 2px 8px rgba(0,0,0,.5); white-space: nowrap; }
.tip b { font-weight: 400; color: #7e9ccc; }
.mark { position: absolute; left: 855px; top: 574px; width: 312px; height: 82px; border: 3px solid #ff2600; }
.note { position: absolute; left: 1351px; top: 329px; font-size: 40px; line-height: 60px; color: #ff2600; text-shadow: none; white-space: nowrap; }

/* right column */
.side { flex: 0 0 448px; display: flex; flex-direction: column; gap: 8px; min-width: 0; }
.outliner { flex: 0 0 247px; background: #282828; }
.ohead { display: flex; height: 54px; padding: 5px 33px 0 17px; gap: 11px; background: #2b2b2b; }
.search { background: #1d1d1d; align-items: center; padding-left: 8px; gap: 14px; }
.search input { width: 100%; color: #fff; }
.search input::placeholder { color: #656565; opacity: 1; }
.ohead .search { width: 230px; margin-left: auto; }
.rows { list-style: none; margin: 0; padding: 0; position: relative; }
.rows::before { content: ""; position: absolute; left: 57px; top: 89px; width: 2px; height: 100px; background: #666; z-index: 1; }
.rows li { display: flex; align-items: center; height: 40px; padding-right: 27px; color: #b4b4b4; }
.rows .alt { background: #2b2b2b; }
.root { padding-left: 46px; gap: 15px; }
.root .i { color: #ddd; }
.coll { padding-left: 46px; }
.rows .coll span { color: #fff; margin-left: 8px; }
.bd { display: flex; align-items: center; justify-content: center; width: 40px; height: 36px; border-radius: 9px; background: #4a4a4a; overflow: hidden; flex: none; }
.ring { border: 2px solid #777; margin-left: 6px; color: #eee; }
.obj { padding-left: 86px; }
.obj > .i + .o { margin-left: 11px; color: #bd7e4a; }
.obj span { margin-left: 10px; }
.obj span + .bd { margin-left: 40px; color: #00b989; }
.half { width: 20px; justify-content: flex-start; padding-left: 4px; border-radius: 9px 0 0 9px; }
.plain { background: none; }
.tog { display: flex; align-items: center; gap: 12px; margin-left: auto; color: #e6e6e6; }
.tog input { appearance: none; width: 20px; height: 20px; border-radius: 3px; background: #e6e6e6; margin-right: 4px; display: grid; place-items: center; }
.tog input::before { content: ""; width: 6px; height: 11px; border: solid #222; border-width: 0 3px 3px 0; rotate: 40deg; margin-bottom: 3px; }
.rows .act { margin: 0 4px 0 6px; padding: 0 23px 0 6px; background: #334d80; border-radius: 6px; box-shadow: inset 0 0 0 2px #4a6cb0; color: #ffaf29; }
.act .em { color: #dfe6f5; }
.act .em + .i { margin-left: 46px; color: #ccc; }
.rows .om { background: #50608a; color: #cc8c5c; margin-left: 6px; }
.rows .act span { margin-left: 8px; }
.rows .act .dm { background: #2b5f7c; color: #00c896; }
.osv { position: absolute; right: 5px; top: 54px; width: 6px; height: 145px; border-radius: 3px; background: #404040; }
.osh { position: absolute; left: 17px; right: 36px; bottom: 6px; height: 6px; border-radius: 3px; background: rgba(100,100,100,.4); }

/* properties */
.props { flex: 1; display: flex; flex-direction: column; background: #303030; }
.phead { display: flex; height: 51px; padding: 4px 16px 0 17px; }
.phead .search { width: 230px; margin-left: 49px; }
.drop { width: 40px; margin-left: auto; }
.pbody { flex: 1; display: flex; min-height: 0; }
.ptabs { width: 58px; flex: none; padding: 16px 0 0 4px; background: #181818; display: flex; flex-direction: column; gap: 16px; color: #a8a8a8; }
.ptabs button { width: 54px; height: 56px; padding-left: 14px; border-radius: 9px 0 0 9px; background: #1d1d1d; }
.ptabs .on { background: #303030; color: #709eff; }
.ptabs .wht { color: #d8d8d8; }
.ptabs .org { color: #bd7e4a; }
.ptabs .blu { color: #6284cf; }
.ptabs .grn { color: #00b286; }
.ptabs .red { color: #a8535c; }
.more { margin: 12px 0 0 20px; color: #555; }
.pcont { flex: 1; padding: 16px 16px 0 17px; }
.crumb { display: flex; align-items: center; gap: 18px; height: 40px; padding: 0 6px 0 5px; }
.crumb .pn { margin-left: auto; color: #999; }
.addmod { width: 100%; height: 40px; margin-top: 32px; padding-left: 10px; border: 2px solid #3d3d3d; border-radius: 9px; background: #545454; box-shadow: 0 1px 1px rgba(0,0,0,.25); }
.addmod svg { width: 20px; height: 20px; }
.addmod span { flex: 1; text-align: center; }
.meter { position: absolute; right: 4px; bottom: 147px; width: 10px; height: 94px; padding: 47px 2px 0; border-radius: 5px; background: #6d6d6d; box-shadow: 0 0 0 4px #333; display: flex; }
.meter i { flex: 1; border-radius: 3px; background: linear-gradient(#70c4ff, #3d87ff); }

/* status bar */
.status { flex: none; display: flex; align-items: center; gap: 6px; height: 47px; padding: 0 24px 0 12px; color: #989898; }
.status kbd { width: 64px; height: 32px; border: 2px solid #989898; border-radius: 7px; font: 24px/28px Inter, "Noto Sans CJK SC", sans-serif; text-align: center; }
.ver { margin-left: auto; font-size: 24px; }
```
